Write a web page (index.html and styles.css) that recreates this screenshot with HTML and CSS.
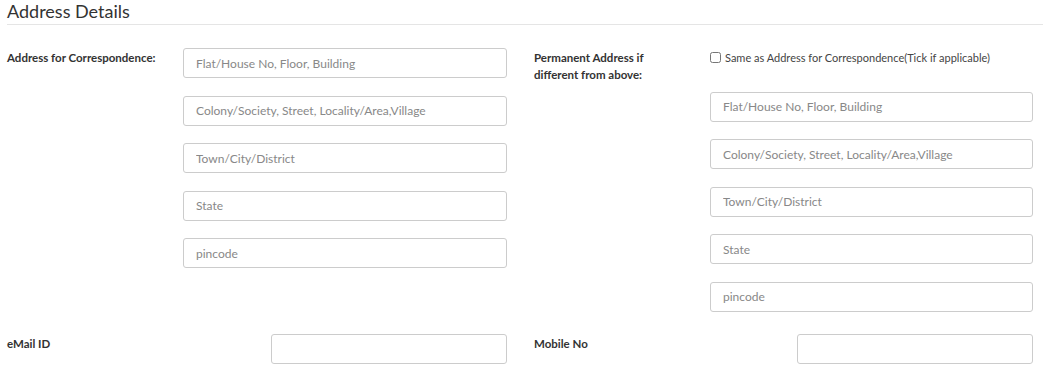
FILE: index.html
```html
<!DOCTYPE html>
<html>
<head>
    <title>Address Details</title>
    <link rel="stylesheet" href="styles.css">
</head>
<body>
    <form id="addressForm">
        <h3 class="section-title">Address Details</h3>

        <div class="form-row">
            <!-- Correspondence address -->
            <div class="form-col address-col">
                <label class="field-label">Address for Correspondence:</label>
                <div class="field-stack">
                    <input type="text" name="corrLine1" placeholder="Flat/House No, Floor, Building">
                    <input type="text" name="corrLine2" placeholder="Colony/Society, Street, Locality/Area,Village">
                    <input type="text" name="corrCity" placeholder="Town/City/District">
                    <input type="text" name="corrState" placeholder="State">
                    <input type="text" name="corrPin" placeholder="pincode">
                </div>
            </div>

            <!-- Permanent address -->
            <div class="form-col address-col">
                <label class="field-label">Permanent Address if<br>different from above:</label>
                <div class="field-stack">
                    <div class="same-check">
                        <input type="checkbox" id="sameAddress" name="sameAddress">
                        <label for="sameAddress">Same as Address for Correspondence(Tick if applicable)</label>
                    </div>
                    <input type="text" name="permLine1" placeholder="Flat/House No, Floor, Building">
                    <input type="text" name="permLine2" placeholder="Colony/Society, Street, Locality/Area,Village">
                    <input type="text" name="permCity" placeholder="Town/City/District">
                    <input type="text" name="permState" placeholder="State">
                    <input type="text" name="permPin" placeholder="pincode">
                </div>
            </div>
        </div>

        <div class="form-row contact-row">
            <div class="form-col contact-col">
                <label class="field-label plain" for="email">eMail ID</label>
                <input type="email" id="email" name="email">
            </div>
            <div class="form-col contact-col">
                <label class="field-label plain" for="mobile">Mobile No</label>
                <input type="tel" id="mobile" name="mobile">
            </div>
        </div>
    </form>
</body>
</html>
```

FILE: styles.css
```css
body {
    font-family: Lato, "Open Sans", Arial, sans-serif;
    color: #333;
    margin: 0;
    padding: 0 10px 0 7px;
}

.section-title {
    margin: 0 -10px 0 0;
    padding: 1px 0 3px;
    font-size: 18px;
    font-weight: normal;
    line-height: 20px;
    color: #333;
    border-bottom: 1px solid #e5e5e5;
}

.form-row {
    display: grid;
    grid-template-columns: 500px 499px;
    column-gap: 27px;
}

.address-col {
    display: grid;
    grid-template-columns: 176px 1fr;
    padding-top: 23px;
}

.contact-row {
    margin-top: 22px;
}

.contact-col {
    display: grid;
    grid-template-columns: 264px 1fr;
    align-items: start;
}

.contact-col:last-child {
    grid-template-columns: 263px 1fr;
}

.field-label {
    font-size: 11.5px;
    font-weight: bold;
    line-height: 17px;
    padding-top: 1px;
    white-space: nowrap;
}

.field-stack {
    display: flex;
    flex-direction: column;
    gap: 17.5px;
}

input[type="text"],
input[type="email"],
input[type="tel"] {
    width: 100%;
    height: 30px;
    padding: 0 12px;
    border: 1px solid #ccc;
    border-radius: 3px;
    box-sizing: border-box;
    font-family: inherit;
    font-size: 12px;
    color: #555;
}

input::placeholder {
    color: #888;
}

.same-check {
    display: flex;
    align-items: center;
    height: 18px;
    margin-bottom: 8px;
    font-size: 11px;
    color: #444;
}

.same-check input {
    margin: 0 4px 0 0;
    width: 11px;
    height: 11px;
}
```
